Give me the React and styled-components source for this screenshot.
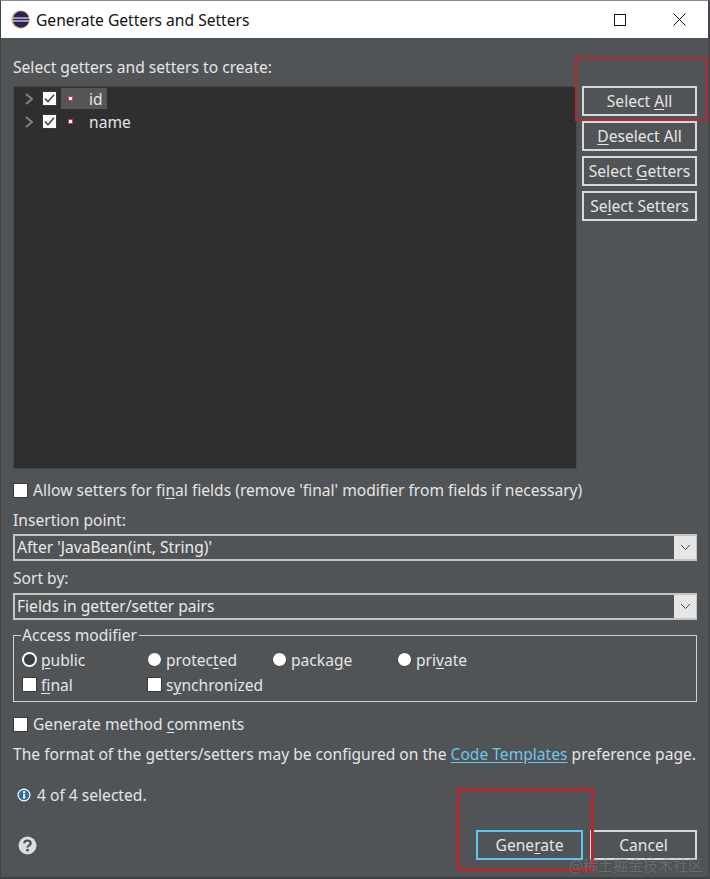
import styled, { createGlobalStyle } from "styled-components";

const GlobalStyle = createGlobalStyle`
html,body{margin:0;padding:0;background:#515457;}
*{box-sizing:border-box;}
`
const Frame = styled.div`
position:relative;
width:710px;height:879px;overflow:hidden;
display:flex;flex-direction:column;
background:#515457;
color:#e4e5e6;
font-family:"Noto Sans","Open Sans",sans-serif;
font-size:15.6px;
line-height:20px;
border-top:1px solid #8a8a8a;
border-left:1px solid #3f4143;
border-right:2px solid #47494c;
border-bottom:2px solid #3f4143;
`
const TitleBar = styled.div`
height:37px;flex:none;
background:#fff;color:#111;
display:flex;align-items:center;
padding-left:10px;
`
const Title = styled.div`
margin-left:6px;flex:1;
`
const WinButton = styled.div`
width:${p => p.$w}px;height:37px;
display:flex;align-items:center;justify-content:center;
`
const Content = styled.div`
flex:1;
display:flex;flex-direction:column;
padding:0 11px 0 12px;
`
const Label = styled.div`
height:20px;
white-space:nowrap;
`
const TopRow = styled.div`
display:flex;gap:5px;
`
const Tree = styled.div`
width:564px;height:383px;
background:#2f2f2f;
border:1px solid #46484a;
`
const TreeRow = styled.div`
display:flex;align-items:center;
height:23px;
padding-left:7px;
`
const Chevron = styled.svg`
width:12px;height:14px;margin-right:9px;flex:none;
`
const TreeText = styled.div`
display:flex;align-items:center;
height:21px;
width:46px;
margin-left:4px;
padding-left:7px;
background:${p => p.$active ? "#555555" : "transparent"};
`
const FieldDot = styled.span`
width:5px;height:5px;margin-right:16px;
background:#fff;border:1px solid #d8394a;border-radius:1px;flex:none;
`
const Side = styled.div`
display:flex;flex-direction:column;gap:5px;width:115px;
`
const Button = styled.div`
width:${p => p.$w || "115px"};height:30px;
display:flex;align-items:center;justify-content:center;
border:2px solid ${p => p.$primary ? "#5fc5ee" : "#d7d8d9"};
background:#515457;
white-space:nowrap;
u{text-underline-offset:2px;text-decoration-thickness:1px;}
`
const Box = styled.span`
width:15px;height:15px;flex:none;
background:#fff;border:1px solid #3a3a3a;
display:flex;align-items:center;justify-content:center;
`
const CheckRow = styled.div`
display:flex;align-items:center;gap:5px;height:20px;
white-space:nowrap;
u{text-underline-offset:2px;text-decoration-thickness:1px;}
`
const Combo = styled.div`
height:27px;
display:flex;align-items:stretch;
border:2px solid #c4c5c6;
border-right-width:1px;
padding-left:2px;
`
const ComboText = styled.div`
flex:1;line-height:23px;color:#eaeaea;
`
const ComboArrow = styled.div`
width:22px;background:#e6e6e6;
display:flex;align-items:center;justify-content:center;
`
const Group = styled.fieldset`
margin:0;height:74px;
border:1px solid #d0d1d2;
padding:0 0 0 8px;
`
const Legend = styled.legend`
padding:0 2px 0 1px;margin-left:-1px;
line-height:14px;
`
const GroupGrid = styled.div`
display:grid;
grid-template-columns:125px 125px 125px 100px;
grid-auto-rows:25px;
margin-top:5px;
`
const Opt = styled.div`
display:flex;align-items:center;gap:4px;
u{text-underline-offset:2px;text-decoration-thickness:1px;}
`
const Radio = styled.span`
width:15px;height:15px;border-radius:50%;flex:none;
background:${p => p.$on ? "#3b3d3f" : "#fff"};
border:${p => p.$on ? "2px solid #fff" : "1px solid #3a3a3a"};
`
const Link = styled.a`
color:#6fc6ea;text-decoration:underline;text-underline-offset:2px;
`
const Status = styled.div`
display:flex;align-items:center;gap:6px;padding-left:4px;
height:20px;
`
const Footer = styled.div`
display:flex;align-items:center;
padding-left:5px;
height:30px;
`
const FooterButtons = styled.div`
margin-left:auto;display:flex;gap:7px;
`
const Spacer = styled.div`
height:${p => p.$h}px;flex:none;
`
const RedMark = styled.div`
position:absolute;
left:${p => p.$x}px;top:${p => p.$y}px;
width:${p => p.$w}px;height:${p => p.$h}px;
border:${p => p.$t}px solid #b5282f;
pointer-events:none;
`
const Watermark = styled.div`
position:absolute;right:5px;bottom:3px;
font-family:"Noto Sans CJK SC","Noto Sans",sans-serif;
font-size:15px;line-height:18px;
color:rgba(255,255,255,.26);
text-shadow:0 0 1px rgba(0,0,0,.35);
white-space:nowrap;
`

function Check() {
  return (
    <svg width="11" height="11" viewBox="0 0 11 11">
      <path d="M1 5.5 L4 8.7 L10 1.8" fill="none" stroke="#333" strokeWidth="1.3" />
    </svg>
  )
}
function Row({ name, active }) {
  return (
    <TreeRow>
      <Chevron viewBox="0 0 12 14"><path d="M5 2 L11 7 L5 12" fill="none" stroke="#7f8285" strokeWidth="2.2" /></Chevron>
      <Box><Check /></Box>
      <TreeText $active={active}>
        <FieldDot /><span>{name}</span>
      </TreeText>
    </TreeRow>
  )
}
function Arrow() {
  return (
    <svg width="11" height="7" viewBox="0 0 11 7">
      <path d="M1 1 L5.5 5.5 L10 1" fill="none" stroke="#444" strokeWidth="1" />
    </svg>
  )
}
export default function App() {
  return (
    <Frame>
      <GlobalStyle />
      <TitleBar>
        <svg width="19" height="19" viewBox="0 0 19 19">
          <circle cx="9.5" cy="9.5" r="9.2" fill="#e3b77a" />
          <circle cx="10" cy="9.5" r="8.2" fill="#2c2255" />
          <rect x="1.5" y="7.4" width="17" height="1.3" fill="#d9d6e8" />
          <rect x="1.5" y="10.3" width="17" height="1.3" fill="#d9d6e8" />
        </svg>
        <Title>Generate Getters and Setters</Title>
        <WinButton $w={60}>
          <svg width="12" height="12" viewBox="0 0 12 12"><rect x=".5" y=".5" width="11" height="11" fill="none" stroke="#111" /></svg>
        </WinButton>
        <WinButton $w={58}>
          <svg width="13" height="13" viewBox="0 0 13 13"><path d="M.5 .5 L12.5 12.5 M12.5 .5 L.5 12.5" stroke="#111" fill="none" /></svg>
        </WinButton>
      </TitleBar>
      <Content>
        <Spacer $h={19} />
        <Label>Select getters and setters to create:</Label>
        <Spacer $h={9} />
        <TopRow>
          <Tree>
            <Row name="id" active />
            <Row name="name" />
          </Tree>
          <Side>
            <Button><span>Select <u>A</u>ll</span></Button>
            <Button><span><u>D</u>eselect All</span></Button>
            <Button><span>Select <u>G</u>etters</span></Button>
            <Button><span>Se<u>l</u>ect Setters</span></Button>
          </Side>
        </TopRow>
        <Spacer $h={11} />
        <CheckRow><Box /><span>Allow setters for fi<u>n</u>al fields (remove 'final' modifier from fields if necessary)</span></CheckRow>
        <Spacer $h={10} />
        <Label>Insertion point:</Label>
        <Spacer $h={4} />
        <Combo>
          <ComboText>After 'JavaBean(int, String)'</ComboText>
          <ComboArrow><Arrow /></ComboArrow>
        </Combo>
        <Spacer $h={7} />
        <Label>Sort by:</Label>
        <Spacer $h={5} />
        <Combo>
          <ComboText>Fields in getter/setter pairs</ComboText>
          <ComboArrow><Arrow /></ComboArrow>
        </Combo>
        <Spacer $h={8} />
        <Group>
          <Legend>Access modifier</Legend>
          <GroupGrid>
            <Opt><Radio $on /><span><u>p</u>ublic</span></Opt>
            <Opt><Radio /><span>protec<u>t</u>ed</span></Opt>
            <Opt><Radio /><span>packa<u>g</u>e</span></Opt>
            <Opt><Radio /><span>pri<u>v</u>ate</span></Opt>
            <Opt><Box /><span><u>f</u>inal</span></Opt>
            <Opt><Box /><span>s<u>y</u>nchronized</span></Opt>
          </GroupGrid>
        </Group>
        <Spacer $h={12} />
        <CheckRow><Box /><span>Generate method <u>c</u>omments</span></CheckRow>
        <Spacer $h={10} />
        <Label>The format of the getters/setters may be configured on the <Link>Code Templates</Link> preference page.</Label>
        <Spacer $h={21} />
        <Status>
          <svg width="14" height="14" viewBox="0 0 14 14">
            <circle cx="7" cy="7" r="6.5" fill="#fff" />
            <circle cx="7" cy="7" r="5.3" fill="#2f6ea5" />
            <rect x="6" y="6" width="2.2" height="4.6" fill="#fff" />
            <rect x="6" y="3.2" width="2.2" height="2" fill="#fff" />
          </svg>
          <span>4 of 4 selected.</span>
        </Status>
        <Spacer $h={25} />
        <Footer>
          <svg width="19" height="19" viewBox="0 0 19 19">
            <circle cx="9.5" cy="9.5" r="9" fill="#dcdcdc" />
            <path d="M6.3 7.2 C6.3 3.6 12.7 3.6 12.7 7.2 C12.7 9.5 9.5 9.3 9.5 11.6" fill="none" stroke="#4a4d50" strokeWidth="2.2" />
            <circle cx="9.5" cy="14.2" r="1.4" fill="#4a4d50" />
          </svg>
          <FooterButtons>
            <Button $primary $w="107px"><span>Gene<u>r</u>ate</span></Button>
            <Button $w="107px"><span>Cancel</span></Button>
          </FooterButtons>
        </Footer>
      </Content>
      <RedMark $x={574} $y={56} $w={133} $h={64} $t={2} />
      <RedMark $x={456} $y={787} $w={137} $h={83} $t={3} />
      <Watermark>@稀土掘金技术社区</Watermark>
    </Frame>
  )
}
